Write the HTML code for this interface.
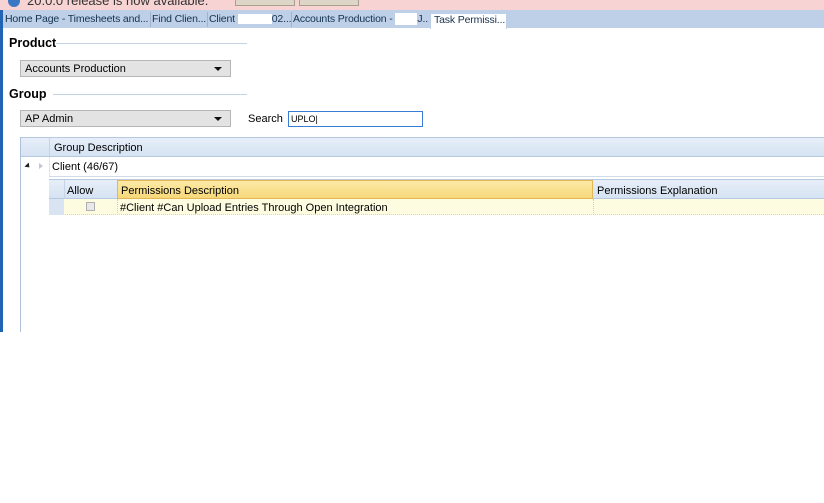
<!DOCTYPE html>
<html><head><meta charset="utf-8"><style>
*{box-sizing:border-box;margin:0;padding:0}
body{width:824px;height:503px;background:#fff;font-family:"Liberation Sans",sans-serif;font-size:11px;color:#000;position:relative;overflow:hidden}
.abs{position:absolute}
.tab{position:absolute;top:11px;height:17px;line-height:17px;font-size:10.5px;letter-spacing:-0.15px;color:#15314f;white-space:nowrap;overflow:hidden}
.sep{position:absolute;top:12px;width:1px;height:15px;background:#9fb3cc}
.sec{position:absolute;left:9px;font-weight:bold;font-size:12.5px}
.line{position:absolute;height:1px;background:#c4d3e6}
.combo{position:absolute;left:20px;width:211px;height:17px;background:#e3e3e3;border:1px solid #b6b6b6;padding-left:4px;line-height:16px;font-size:11px}
.combo:after{content:"";position:absolute;right:8px;top:6px;border-left:4px solid transparent;border-right:4px solid transparent;border-top:4px solid #111}
.hdr{background:linear-gradient(#e6eef8,#d6e3f3);border-bottom:1px solid #b7c9e0}
</style></head><body>
<div class="abs" style="left:0;top:0;width:824px;height:10px;background:#f8d3d3"></div>
<div class="abs" style="left:8px;top:-5px;width:12px;height:12px;border-radius:6px;background:#3b78c4"></div>
<div class="abs" style="left:27px;top:-6px;font-size:13px;color:#333;line-height:14px">20.0.0 release is now available.</div>
<div class="abs" style="left:235px;top:-6px;width:60px;height:12px;background:#ddd6c8;border:1px solid #a89f8c"></div>
<div class="abs" style="left:299px;top:-6px;width:60px;height:12px;background:#ddd6c8;border:1px solid #a89f8c"></div>
<div class="abs" style="left:0;top:10px;width:824px;height:18px;background:#bdd0e8"></div>
<div class="abs" style="left:0;top:10px;width:3px;height:322px;background:#2164b4"></div>
<div class="tab" style="left:5px;width:143px">Home Page - Timesheets and...</div><div class="sep" style="left:150px"></div>
<div class="tab" style="left:152px;width:54px">Find Clien...</div><div class="sep" style="left:207px"></div>
<div class="tab" style="left:209px;width:82px">Client <span style="display:inline-block;width:34px;height:10px;background:#fff;vertical-align:middle"></span>02...</div><div class="sep" style="left:291px"></div>
<div class="tab" style="left:293px;width:136px">Accounts Production - <span style="display:inline-block;width:22px;height:12px;background:#fff;vertical-align:middle"></span>J...</div>
<div class="abs" style="left:430px;top:13px;width:77px;height:16px;background:#fff;border:1px solid #bdd0e8;border-bottom:none"></div>
<div class="tab" style="left:434px;top:12px;width:72px">Task Permissi...</div>
<div class="sec" style="top:36px">Product</div><div class="line" style="left:56px;top:43px;width:191px"></div>
<div class="combo" style="top:60px">Accounts Production</div>
<div class="sec" style="top:87px">Group</div><div class="line" style="left:53px;top:94px;width:194px"></div>
<div class="combo" style="top:110px">AP Admin</div>
<div class="abs" style="left:248px;top:113px">Search</div>
<div class="abs" style="left:288px;top:111px;width:135px;height:16px;border:1px solid #3a7bd5;font-size:9px;line-height:14px;padding-left:2px">UPLO|</div>
<div class="abs" style="left:20px;top:137px;width:1px;height:195px;background:#aec0d9"></div>
<div class="abs hdr" style="left:21px;top:137px;width:803px;height:20px;border-top:1px solid #b7c9e0"></div>
<div class="abs" style="left:49px;top:138px;width:1px;height:18px;background:#c4d3e6"></div>
<div class="abs" style="left:54px;top:142px">Group Description</div>
<div class="abs" style="left:25px;top:164px;border-left:3px solid transparent;border-right:3px solid transparent;border-top:4px solid #222;transform:rotate(-45deg)"></div>
<div class="abs" style="left:39px;top:163px;border-top:3px solid transparent;border-bottom:3px solid transparent;border-left:4px solid #c0c8d4"></div>
<div class="abs" style="left:49px;top:157px;width:1px;height:19px;background:#dde6f2"></div>
<div class="abs" style="left:52px;top:161px">Client (46/67)</div>
<div class="abs" style="left:49px;top:176px;width:775px;height:1px;background:#d0dbe8"></div>
<div class="abs hdr" style="left:49px;top:179px;width:775px;height:20px;border-top:1px solid #b7c9e0"></div>
<div class="abs" style="left:64px;top:180px;width:1px;height:35px;background:#c4d3e6"></div>
<div class="abs" style="left:67px;top:185px">Allow</div>
<div class="abs" style="left:117px;top:180px;width:476px;height:19px;background:linear-gradient(#fbe9a6,#f7d97a);border:1px solid #e5b654"></div>
<div class="abs" style="left:121px;top:185px">Permissions Description</div>
<div class="abs" style="left:597px;top:185px">Permissions Explanation</div>
<div class="abs" style="left:49px;top:199px;width:775px;height:16px;background:#fefce0;border-bottom:1px dotted #d6d6c0"></div>
<div class="abs" style="left:49px;top:199px;width:15px;height:16px;background:#d9e4f2"></div>
<div class="abs" style="left:117px;top:199px;width:1px;height:16px;border-left:1px dotted #cfcfc0"></div>
<div class="abs" style="left:593px;top:199px;width:1px;height:16px;border-left:1px dotted #cfcfc0"></div>
<div class="abs" style="left:86px;top:202px;width:9px;height:9px;border:1px solid #b0b0b0;background:#e8e8e8"></div>
<div class="abs" style="left:120px;top:202px">#Client #Can Upload Entries Through Open Integration</div>
</body></html>
